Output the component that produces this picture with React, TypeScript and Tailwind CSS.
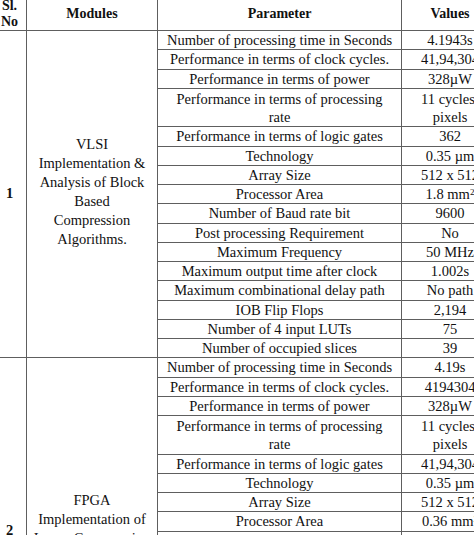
import React from "react";

type Row = { p: React.ReactNode; v: React.ReactNode; d?: boolean };

const sec1: Row[] = [
  { p: "Number of processing time in Seconds", v: "4.1943s" },
  { p: "Performance in terms of clock cycles.", v: "41,94,304" },
  { p: "Performance in terms of power", v: "328\u00b5W" },
  { p: <>Performance in terms of processing<br />rate</>, v: <>11 cycles/<br />pixels</>, d: true },
  { p: "Performance in terms of logic gates", v: "362" },
  { p: "Technology", v: "0.35 \u00b5m" },
  { p: "Array Size", v: "512 x 512" },
  { p: "Processor Area", v: <>1.8 mm<sup className="text-[9px]">2</sup></> },
  { p: "Number of Baud rate bit", v: "9600" },
  { p: "Post processing Requirement", v: "No" },
  { p: "Maximum Frequency", v: "50 MHz" },
  { p: "Maximum output time after clock", v: "1.002s" },
  { p: "Maximum combinational delay path", v: "No path" },
  { p: "IOB Flip Flops", v: "2,194" },
  { p: "Number of 4 input LUTs", v: "75" },
  { p: "Number of occupied slices", v: "39" },
];

const sec2: Row[] = [
  { p: "Number of processing time in Seconds", v: "4.19s" },
  { p: "Performance in terms of clock cycles.", v: "4194304" },
  { p: "Performance in terms of power", v: "328\u00b5W" },
  { p: <>Performance in terms of processing<br />rate</>, v: <>11 cycles/<br />pixels</>, d: true },
  { p: "Performance in terms of logic gates", v: "41,94,304" },
  { p: "Technology", v: "0.35 \u00b5m" },
  { p: "Array Size", v: "512 x 512" },
  { p: "Processor Area", v: <>0.36 mm<sup className="text-[9px]">2</sup></> },
  { p: "Number of Baud rate bit", v: "9600" },
  { p: "Post processing Requirement", v: "No" },
  { p: "Maximum Frequency", v: "50 MHz" },
  { p: "Maximum output time after clock", v: "1.002s" },
  { p: "Maximum combinational delay path", v: "No path" },
  { p: "IOB Flip Flops", v: "2,194" },
  { p: "Number of 4 input LUTs", v: "75" },
  { p: "Number of occupied slices", v: "39" },
  { p: "Number of Slice Flip Flops", v: "24" },
];

function Rows({ rows }: { rows: Row[] }) {
  return (
    <>
      {rows.map((r, i) => (
        <React.Fragment key={i}>
          <div
            className={`bg-white flex items-center justify-center text-center leading-[18px] whitespace-nowrap ${
              r.d ? "h-[37.5px]" : "h-[18.25px]"
            }`}
          >
            <span>{r.p}</span>
          </div>
          <div
            className={`bg-white flex items-center justify-center text-center leading-[18px] whitespace-nowrap ${
              r.d ? "h-[37.5px]" : "h-[18.25px]"
            }`}
          >
            <span>{r.v}</span>
          </div>
        </React.Fragment>
      ))}
    </>
  );
}

export default function App() {
  return (
    <div className="w-[474px] h-[535px] overflow-hidden bg-white font-['Liberation_Serif',serif] text-[14.5px] text-[#111]">
      <div className="ml-[-8px] mt-[-4px] w-max grid grid-cols-[33px_130px_243px_96px] gap-px p-px bg-[#5e5e5e]">
        {/* header */}
        <div className="bg-white h-[33px] flex items-center justify-center text-center font-bold text-[14px] leading-[16px]">
          <span>
            Sl.
            <br />
            No
          </span>
        </div>
        <div className="bg-white h-[33px] flex items-center justify-center font-bold text-[14px]">Modules</div>
        <div className="bg-white h-[33px] flex items-center justify-center font-bold text-[14px]">Parameter</div>
        <div className="bg-white h-[33px] flex items-center justify-center font-bold text-[14px]">Values</div>

        {/* section 1 */}
        <div className="bg-white row-span-16 flex items-center justify-center font-bold">1</div>
        <div className="bg-white row-span-16 flex items-center justify-center text-center leading-[19px] whitespace-nowrap px-2 pb-[4px]">
          <span>
            VLSI
            <br />
            Implementation &amp;
            <br />
            Analysis of Block
            <br />
            Based
            <br />
            Compression
            <br />
            Algorithms.
          </span>
        </div>
        <Rows rows={sec1} />

        {/* section 2 */}
        <div className="bg-white row-span-17 flex items-center justify-center font-bold">2</div>
        <div className="bg-white row-span-17 flex items-center justify-center text-center leading-[19px] whitespace-nowrap px-2 pb-[4px]">
          <span>
            FPGA
            <br />
            Implementation of
            <br />
            Image Compression
            <br />
            Algorithms.
          </span>
        </div>
        <Rows rows={sec2} />
      </div>
    </div>
  );
}
